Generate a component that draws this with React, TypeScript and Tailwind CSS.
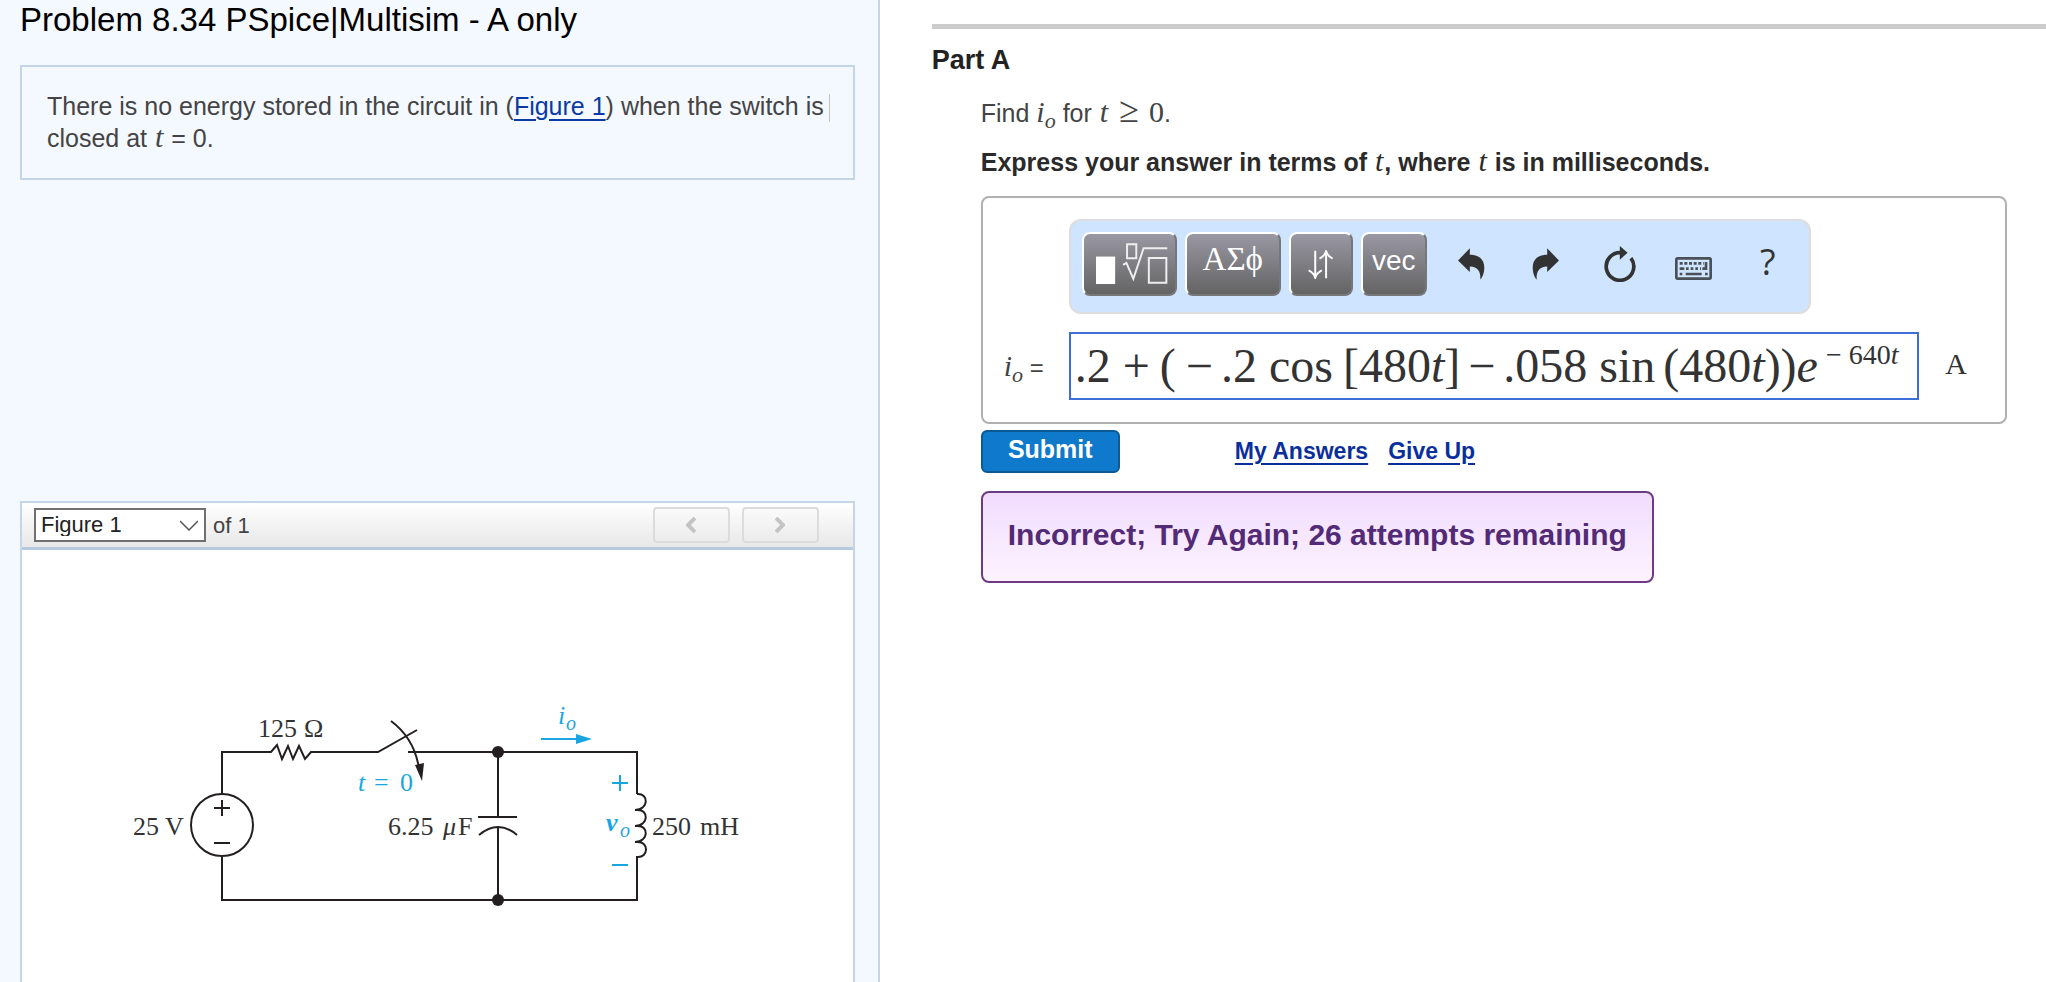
import { useState } from "react";
import type { ReactNode } from "react";

function MathVar({ children }: { children: ReactNode }) {
  return <i className="mx-px font-['Liberation_Serif',serif] text-[30px] leading-none font-normal">{children}</i>;
}

// variable "i" with a small "o" under it
function CurrentO() {
  return (
    <span className="font-['Liberation_Serif',serif] text-[30px] leading-none italic font-normal">
      i<sub className="text-[22px]">o</sub>
    </span>
  );
}

function Circuit() {
  return (
    <svg
      viewBox="120 700 630 210"
      className="w-[630px] max-w-full"
      fill="none"
      stroke="#231f20"
      strokeWidth="2"
      role="img"
      aria-label="Circuit diagram"
    >
      {/* wires */}
      <path d="M222 794V752H271L277 745L282 759L288 746L293 759L299 746L305 759L311 752H378L417 730" />
      <path d="M408 752H637V794" />
      <path d="M222 857V900H637V856" />
      <path d="M498 752V817M498 827V900M478 817H517M479 835Q498 819 517 835" />
      <path d="M637 794c12 -1 12 16 -2 16h2c12 -1 12 16 -2 16h2c12 -1 12 16 -2 16h2c12 -1 12 16 0 15" />
      <circle cx="222" cy="825" r="31" />
      <path d="M214 808h16M222 800v16M214 843h16" />
      <circle cx="498" cy="752" r="6" fill="#231f20" stroke="none" />
      <circle cx="498" cy="900" r="6" fill="#231f20" stroke="none" />
      {/* switch arrow */}
      <path d="M391 721Q414 738 419 768" />
      <path d="M415 765L424 763L422 781Z" fill="#231f20" stroke="none" />
      {/* reference directions */}
      <g stroke="#1ba5e0">
        <path d="M541 739H578M612 783h16M620 775v16M612 865h16" />
        <path d="M576 734L592 739L576 744Z" fill="#1ba5e0" stroke="none" />
      </g>
      <g className="font-['Liberation_Serif',serif] text-[26px]" fill="#333" stroke="none">
        <text x="258" y="737">125 <tspan x="304">Ω</tspan></text>
        <text x="133" y="835">25 V</text>
        <text x="388" y="835">6.25 <tspan x="443" className="italic">μ</tspan><tspan x="458">F</tspan></text>
        <text x="652" y="835">250 <tspan x="700">mH</tspan></text>
        <g fill="#1ba5e0">
          <text x="358" y="791"><tspan className="italic">t</tspan> <tspan x="374">=</tspan> <tspan x="400">0</tspan></text>
          <text x="558" y="724" className="italic">i</text>
          <text x="566" y="730" className="text-[20px] italic">o</text>
          <text x="606" y="831" className="font-bold italic">v</text>
          <text x="620" y="837" className="text-[20px] italic">o</text>
        </g>
      </g>
    </svg>
  );
}

const toolButton =
  "flex h-16 items-center justify-center rounded-lg border-2 border-t-white border-l-white border-r-[#77777a] border-b-[#77777a] bg-linear-to-b from-[#9a98a3] to-[#646464] text-white";

const iconButton = "flex h-16 w-[74px] items-center justify-center text-[#333]";

function Toolbar() {
  return (
    <div role="toolbar" aria-label="Equation tools" className="flex w-fit max-w-full rounded-xl border-2 border-[#dcdcdc] bg-[#cfe5ff] pt-[11px] pr-1 pb-4 pl-[11px]">
      <div className="mr-2 flex gap-2">
        <button type="button" aria-label="Templates" className={`${toolButton} w-[95px] pb-[2px] pl-[5px]`}>
          <svg viewBox="0 0 218 124" className="h-[41px] w-[72px]" fill="none" stroke="#eee" strokeWidth="6">
            <path d="M0 41H58V124H0Z" fill="#fff" stroke="none" />
            <path d="M94 4H122V46H94ZM160 45H213V120H160Z" />
            <path d="M82 66L92 60L113 108L144 16H216" />
          </svg>
        </button>
        <button type="button" className={`${toolButton} w-[96px] pb-2 font-['Liberation_Serif',serif] text-[33px]`}>
          ΑΣϕ
        </button>
        <button type="button" aria-label="Sub and superscript" className={`${toolButton} w-[64px]`}>
          <svg viewBox="0 0 76 86" className="h-[29px] w-[25px]" fill="none" stroke="#fff" strokeWidth="6">
            <path d="M22 1V83M2 61Q17 68 22 83Q27 68 42 61" />
            <path d="M55 85V3M35 25Q50 18 55 3Q60 18 75 25" />
          </svg>
        </button>
        <button type="button" className={`${toolButton} w-[66px] pb-[6px] text-[28px]`}>
          vec
        </button>
      </div>
      <button type="button" aria-label="Undo" className={iconButton}>
        <svg viewBox="0 0 80 95" className="h-8 w-[27px]" fill="currentColor">
          <path d="M0 37L35 1V20C60 20 78 32 78 58C78 75 72 88 66 94C68 75 62 56 35 55V71Z" />
        </svg>
      </button>
      <button type="button" aria-label="Redo" className={iconButton}>
        <svg viewBox="0 0 80 95" className="h-8 w-[27px]" fill="currentColor">
          <path d="M80 37L45 1V20C20 20 2 32 2 58C2 75 8 88 14 94C12 75 18 56 45 55V71Z" />
        </svg>
      </button>
      <button type="button" aria-label="Reset" className={iconButton}>
        <svg viewBox="0 0 93 107" className="h-9 w-8" fill="none">
          <path d="M79 36A41 41 0 1 1 48 20" stroke="currentColor" strokeWidth="11" />
          <path d="M46 0L69 20L46 41Z" fill="currentColor" />
        </svg>
      </button>
      <button type="button" aria-label="Keyboard" className={`${iconButton} pt-2`}>
        <svg viewBox="0 0 111 69" className="h-[23px] w-[37px]" fill="none" stroke="#4a5058">
          <rect x="4" y="4" width="103" height="61" rx="4" strokeWidth="8" />
          <path d="M14 19H86" strokeWidth="8" strokeDasharray="9 5" />
          <path d="M14 35H78" strokeWidth="8" strokeDasharray="14 5 8 6 8 6 8 6" />
          <path d="M93 15V35H82" strokeWidth="8" />
          <path d="M14 51H22M32 51H80M90 51H98" strokeWidth="8" />
        </svg>
      </button>
      <button type="button" aria-label="Help" className={`${iconButton} pb-1 font-['Open_Sans',sans-serif] text-[36px]`}>
        ?
      </button>
    </div>
  );
}

function ProblemPanel() {
  const [figure, setFigure] = useState("1");
  const navButton =
    "flex h-9 w-[77px] items-center justify-center rounded-sm border-2 border-[#dcdcdc] bg-linear-to-b from-[#fafafa] to-[#ececec] text-[#c4c4c4]";

  return (
    <aside className="flex w-[43%] shrink-0 flex-col border-r-2 border-[#c3d5e6] bg-[#f4f8ff] pr-[23px] pl-5">
      <h1 className="text-[33px] leading-10 text-black">Problem 8.34 PSpice|Multisim - A only</h1>
      <div className="mt-[25px] border-2 border-[#c3d5e6] pt-6 pr-5 pb-6 pl-[25px]">
        <p className="w-fit text-[25px] leading-[31px]">
          There is no energy stored in the circuit in (
          <a href="#figure" className="text-[#0a3aa5] underline underline-offset-4">Figure 1</a>
          ) when the switch is
          <span className="ml-[5px] inline-block h-[28px] w-px bg-[#c4c4c4] align-middle" />{" "}
          closed at <MathVar>t</MathVar> = 0.
        </p>
      </div>

      <section id="figure" className="mt-[321px] flex flex-1 flex-col border-2 border-b-0 border-[#c3d5e6] bg-white">
        <div className="flex h-[47px] items-center border-b-3 border-[#b6cbdf] bg-linear-to-b from-white to-[#e8e8e8] pr-[34px] pl-3 text-[22px]">
          <div className="relative">
            <select
              aria-label="Figure"
              value={figure}
              onChange={(e) => setFigure(e.target.value)}
              className="h-[34px] w-[172px] appearance-none border-2 border-[#707070] bg-white pl-[5px] leading-none text-[#222]"
            >
              <option value="1">Figure 1</option>
            </select>
            <svg viewBox="0 0 18 11" className="pointer-events-none absolute top-3 right-2 h-[11px] w-[18px]" fill="none" stroke="#555" strokeWidth="1.5">
              <path d="M0 1L9 10L18 1" />
            </svg>
          </div>
          <span className="ml-[7px]">of 1</span>
          <div className="ml-auto flex gap-3">
            <button type="button" aria-label="Previous figure" className={navButton}>
              <svg viewBox="0 0 10 16" className="h-4 w-[10px]" fill="none" stroke="currentColor" strokeWidth="4">
                <path d="M9 1L2 8L9 15" />
              </svg>
            </button>
            <button type="button" aria-label="Next figure" className={navButton}>
              <svg viewBox="0 0 10 16" className="h-4 w-[10px]" fill="none" stroke="currentColor" strokeWidth="4">
                <path d="M1 1L8 8L1 15" />
              </svg>
            </button>
          </div>
        </div>
        <div className="pt-[150px] pb-[70px] pl-[98px]">
          <Circuit />
        </div>
      </section>
    </aside>
  );
}

function AnswerField() {
  return (
    <div className="relative flex h-[68px] flex-1 items-center border-2 border-[#3c70d8] bg-white pl-[4px] font-['Liberation_Serif',serif] text-[48px] leading-none whitespace-nowrap text-[#333]">
      <div className="flex items-baseline">
        <span>.2</span>
        <span className="ml-[12px]">+</span>
        <span className="ml-[10px]">(</span>
        <span className="ml-[10px]">−</span>
        <span className="ml-[8px]">.2</span>
        <span className="ml-[12px]">cos</span>
        <span className="ml-[10px]">[480<i>t</i>]</span>
        <span className="ml-[8px]">−</span>
        <span className="ml-[8px]">.058</span>
        <span className="ml-[12px]">sin</span>
        <span className="ml-[8px]">(480<i>t</i>))</span>
        <span>
          <i>e</i>
          <sup className="static ml-[8px] align-[18px] text-[28px]">− 640<i>t</i></sup>
        </span>
      </div>
      {/* catches the keystrokes, the formula is drawn underneath */}
      <input id="answer" type="text" className="absolute inset-0 h-full w-full bg-transparent text-transparent outline-none" />
    </div>
  );
}

function AnswerPanel() {
  return (
    <main className="min-w-0 flex-1 pt-6 pl-[52px]">
      <hr className="h-[5px] border-0 bg-[#ccc]" />
      <h2 className="mt-4 text-[27px] leading-[30px] font-bold text-[#222]">Part A</h2>
      <div className="mt-[17px] pr-[39px] pl-[49px]">
        <p className="text-[25px] leading-[31px]">
          Find <CurrentO /> for <MathVar>t</MathVar>
          <span className="mx-[10px] font-['Liberation_Serif',serif] text-[36px] leading-none">≥</span>
          <span className="font-['Liberation_Serif',serif] text-[30px] leading-none">0</span>.
        </p>
        <p className="mt-[17px] text-[25px] leading-[31px] font-bold text-[#2a2a2a]">
          Express your answer in terms of <MathVar>t</MathVar>, where <MathVar>t</MathVar> is in milliseconds.
        </p>

        <form onSubmit={(e) => e.preventDefault()}>
          <div className="mt-[18px] rounded-lg border-2 border-[#b0b0b0] pt-[21px] pr-[38px] pb-[22px] pl-[21px]">
            <div className="pl-[65px]">
              <Toolbar />
            </div>
            <div className="mt-[18px] flex items-center">
              <label htmlFor="answer" className="w-[65px] text-[24px] leading-none">
                <CurrentO /> =
              </label>
              <AnswerField />
              <span className="ml-[26px] pb-1 font-['Liberation_Serif',serif] text-[30px] leading-none text-[#333]">A</span>
            </div>
          </div>
          <div className="mt-[6px] flex items-center text-[25px] leading-none font-bold">
            <button type="submit" className="h-[43px] w-[139px] rounded-md border-2 border-[#0b5a96] bg-[#0f79cc] pb-1 text-white">
              Submit
            </button>
            <a href="#answers" className="ml-[115px] text-[23px] text-[#0a2f9c] underline underline-offset-4">My Answers</a>
            <a href="#give-up" className="ml-[20px] text-[23px] text-[#0a2f9c] underline underline-offset-4">Give Up</a>
          </div>
        </form>

        <div role="status" className="mt-[18px] flex h-[92px] w-fit items-center rounded-lg border-2 border-[#6d3a86] bg-linear-to-b from-[#f1dcfe] to-[#fdf3ff] px-[25px] pb-1 text-[30px] leading-none font-bold whitespace-nowrap text-[#522a75]">
          Incorrect; Try Again; 26 attempts remaining
        </div>
      </div>
    </main>
  );
}

export default function App() {
  return (
    <div className="flex min-h-screen bg-white font-['Liberation_Sans',Arial,sans-serif] text-[#444]">
      <ProblemPanel />
      <AnswerPanel />
    </div>
  );
}
